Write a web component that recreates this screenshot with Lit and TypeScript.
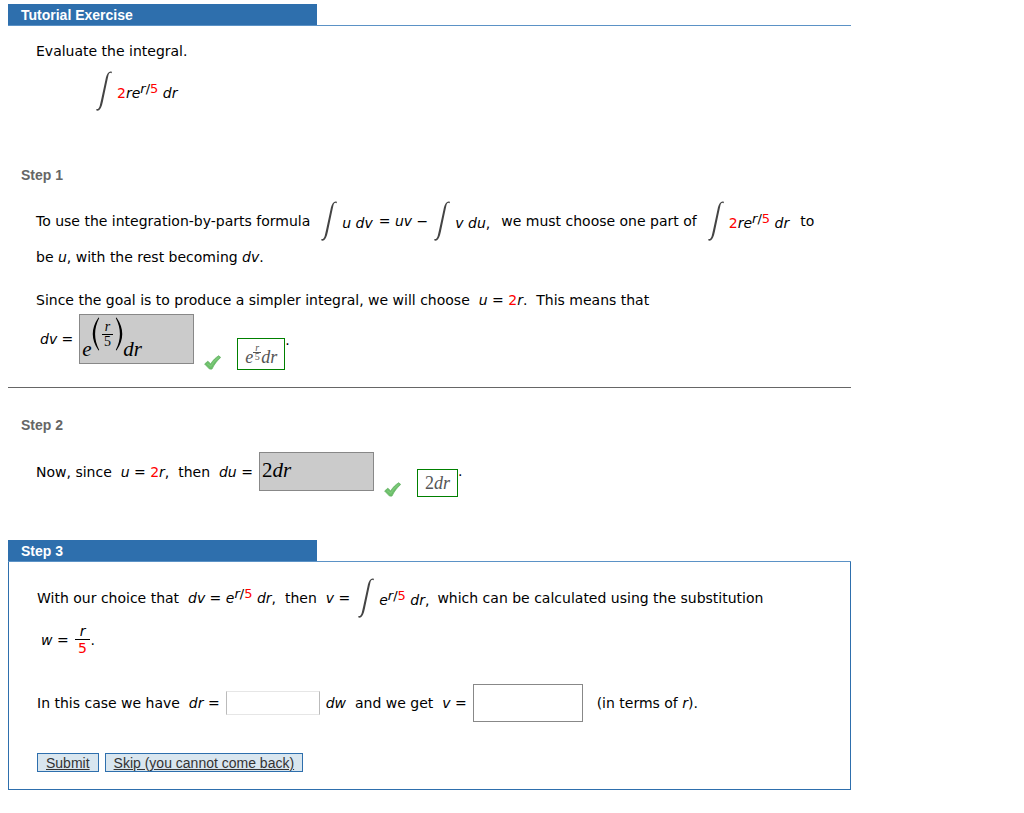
import { LitElement, html, css, TemplateResult } from "lit";
import { customElement } from "lit/decorators.js";

const integral = (body: TemplateResult) => html`
  <span class="integral">
    <svg class="sign" viewBox="0 0 16 40" aria-hidden="true">
      <path d="M15.600 2.200 C14.400 1.200 13.200 1.400 12.500 4 L11 11 L6.800 31 C5.800 35.500 4.800 38 3 39.200 C2 39.900 .8 39.800 .2 39.200 L.5 37.900 C1.800 38.500 2.900 37.600 3.700 35 L5.300 28 L9.400 9 C10.200 5 11 2.600 12.800 1.200 C14 .4 15.300 .4 15.900 1 Z" />
    </svg>
    <span class="integrand">${body}</span>
  </span>`;

const expo = html`<i>e</i><span class="sup"><i>r</i>/<span class="red">5</span></span>`;
const integrand = html`<span class="red">2</span><i>r</i>${expo} <i>dr</i>`;

const check = html`
  <svg class="check" viewBox="0 0 16 14" role="img" aria-label="Correct">
    <path d="M.6 8.400 L3.600 5.800 L6.300 8.300 C8.500 4.800 11 2.300 14 .6 L15.700 2.300 C12 5.500 9.500 9 7.500 13.200 L5.200 13.200 Z" fill="#6cbf6a" stroke="#5fae5f" stroke-width=".7" />
    <path d="M3 8 L6.400 10.500 C8.600 6.500 11 4 14 2" fill="none" stroke="#7fcb7c" stroke-width="1" />
  </svg>`;

@customElement("app-root")
export class AppRoot extends LitElement {
  static styles = css`
    :host {
      display: block;
      padding: 4px 8px 20px;
      background: #fff;
      color: #000;
      font: 14px/20px "DejaVu Sans", Verdana, sans-serif;
    }
    * { box-sizing: border-box; }
    main { max-width: 843px; }
    p { margin: 0; }
    .red { color: #f00; }
    .tabbar { border-bottom: 1px solid #5b92c6; }
    h2, h3 {
      margin: 0;
      font: bold 14px/20px "Liberation Sans", Arial, sans-serif;
    }
    h2 {
      width: 309px;
      max-width: 100%;
      height: 21px;
      padding-left: 13px;
      background: #2e6fad;
      color: #fff;
      line-height: 22px;
    }
    h3 { padding-left: 13px; color: #666; }
    .body { padding-left: 28px; }
    .intro { padding-top: 15px; padding-bottom: 49px; }
    .display { padding: 10px 0 0 60px; }
    .row { display: flex; flex-wrap: wrap; align-items: center; column-gap: 8px; }
    .wide { column-gap: 11px; }
    .tight { column-gap: 6px; }
    .integral { display: inline-flex; align-items: center; gap: 5px; }
    .sign { width: 16px; height: 40px; fill: #444; }
    .integrand { padding-top: 4px; white-space: nowrap; }
    .sup { position: relative; top: -5px; font-size: 13px; line-height: 1; }
    .step1 { padding-top: 16px; padding-bottom: 17px; }
    .wrapped { padding-top: 6px; }
    .since { padding-top: 23px; padding-bottom: 4px; }
    .answer { display: flex; align-items: flex-end; column-gap: 10px; }
    .work { display: flex; align-items: center; gap: 6px; }
    .indent { padding-left: 4px; }
    .lift { padding-bottom: 6px; }
    .field {
      display: block;
      width: 115px;
      border: 1px solid #888;
      background: #cbcbcb;
      font: 21px/24px "Liberation Serif", "Times New Roman", serif;
    }
    .flat { height: 39px; padding: 5px 2px; }
    .tall { height: 50px; padding: 2px; display: flex; align-items: flex-end; }
    .power { display: flex; align-items: center; align-self: flex-start; }
    .paren { width: 8px; height: 34px; fill: #000; }
    .frac { display: inline-flex; flex-direction: column; align-items: center; }
    .frac > :first-child { border-bottom: 1px solid currentColor; padding: 0 3px; }
    .power .frac { font-size: 14px; line-height: 14px; padding: 0 2px; }
    .check { width: 17px; height: 15px; }
    .key { display: flex; align-items: flex-start; padding-left: 6px; }
    .keybox {
      display: flex;
      align-items: center;
      border: 1px solid #008000;
      padding: 0 7px;
      height: 28px;
      color: #555;
      font: 18px/24px "Liberation Serif", "Times New Roman", serif;
    }
    .high { height: 32px; padding-top: 5px; }
    .keybox .frac { font-size: 10px; line-height: 8px; padding-bottom: 9px; }
    .keybox .frac > :first-child { padding: 0 2px; }
    .dot { line-height: 4px; }
    hr { margin: 0; border: 0; border-top: 1px solid #666; }
    .step2head { padding-top: 27px; }
    .step2 { padding-top: 17px; padding-bottom: 43px; }
    .panel {
      border: 1px solid #2e6fad;
      border-top: 0;
      padding: 16px 28px 17px;
    }
    .ratio { padding: 5px 0 0 4px; }
    .ratio .frac { line-height: 16px; }
    .ratio .frac > :first-child { padding: 0 5px; }
    .fraction { display: inline-flex; align-items: center; }
    .inputs { padding-top: 28px; }
    input { margin: 0; background: #fff; font: inherit; border-radius: 0; }
    .small { width: 94px; height: 24px; border: 1px solid #e6e6e6; border-left-color: #bbb; border-right-color: #bbb; }
    .large { width: 110px; height: 38px; border: 1px solid #888; margin-right: 8px; }
    .actions { display: flex; gap: 6px; padding-top: 31px; }
    button {
      margin: 0;
      padding: 1px 8px 0;
      height: 19px;
      border: 1px solid #2e6fad;
      border-radius: 0;
      background: #d9e6ef;
      color: #333;
      font: 14px/17px "Liberation Sans", Arial, sans-serif;
      text-decoration: underline;
    }
  `;

  render() {
    return html`
      <main>
        <section>
          <div class="tabbar"><h2>Tutorial Exercise</h2></div>
          <div class="body intro">
            <p>Evaluate the integral.</p>
            <div class="display">${integral(integrand)}</div>
          </div>
        </section>

        <section>
          <h3>Step 1</h3>
          <div class="body step1">
            <div class="row wide">
              <span>To use the integration-by-parts formula</span>
              <span class="row tight">
                ${integral(html`<i>u</i> <i>dv</i>`)}
                <span>= <i>uv</i> −</span>
                ${integral(html`<i>v</i> <i>du</i>,`)}
              </span>
              <span>we must choose one part of</span>
              ${integral(integrand)}
              <span>to</span>
            </div>
            <p class="wrapped">be <i>u</i>, with the rest becoming <i>dv</i>.</p>
            <p class="since">Since the goal is to produce a simpler integral, we will choose &nbsp;<i>u</i> = <span class="red">2</span><i>r</i>. &nbsp;This means that</p>
            <div class="answer indent">
              <div class="work lift">
                <span><i>dv</i> =</span>
                <span class="field tall">
                  <i>e</i>
                  <span class="power">
                    <svg class="paren" viewBox="0 0 8 34"><path d="M6.500 .5 Q-5 17 6.500 33.500 L7.200 33 Q-1 17 7.200 1 Z" /></svg>
                    <span class="frac"><i>r</i><span>5</span></span>
                    <svg class="paren" viewBox="0 0 8 34"><path d="M1.500 .5 Q13 17 1.500 33.500 L.8 33 Q9 17 .8 1 Z" /></svg>
                  </span>
                  <i>dr</i>
                </span>
              </div>
              ${check}
              <div class="key">
                <span class="keybox high"><i>e</i><span class="frac"><i>r</i><span>5</span></span><i>dr</i></span>
                <span class="dot">.</span>
              </div>
            </div>
          </div>
          <hr />
        </section>

        <section>
          <h3 class="step2head">Step 2</h3>
          <div class="body step2">
            <div class="answer">
              <div class="work lift">
                <span>Now, since &nbsp;<i>u</i> = <span class="red">2</span><i>r</i>, &nbsp;then &nbsp;<i>du</i> =</span>
                <span class="field flat">2<i>dr</i></span>
              </div>
              ${check}
              <div class="key">
                <span class="keybox">2<i>dr</i></span>
                <span class="dot">.</span>
              </div>
            </div>
          </div>
        </section>

        <section>
          <div class="tabbar"><h2>Step 3</h2></div>
          <form class="panel" @submit=${(e: Event) => e.preventDefault()}>
            <div class="row">
              <span>With our choice that &nbsp;<i>dv</i> = ${expo} <i>dr</i>, &nbsp;then &nbsp;<i>v</i> =</span>
              ${integral(html`${expo} <i>dr</i>,`)}
              <span>which can be calculated using the substitution</span>
            </div>
            <div class="row tight ratio">
              <span><i>w</i> =</span>
              <span class="fraction"><span class="frac"><i>r</i><span class="red">5</span></span>.</span>
            </div>
            <div class="row tight inputs">
              <label for="dr">In this case we have &nbsp;<i>dr</i> =</label>
              <input id="dr" class="small" type="text" />
              <label for="v"><i>dw</i> &nbsp;and we get &nbsp;<i>v</i> =</label>
              <input id="v" class="large" type="text" />
              <span>(in terms of <i>r</i>).</span>
            </div>
            <div class="actions">
              <button type="submit">Submit</button>
              <button type="button">Skip (you cannot come back)</button>
            </div>
          </form>
        </section>
      </main>
    `;
  }
}
